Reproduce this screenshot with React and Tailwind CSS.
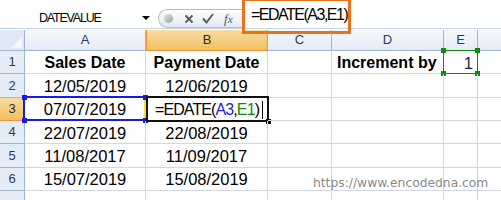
import React from "react"

const cols = [
  { key: "A", w: "w-[121px]" },
  { key: "B", w: "w-[122px]" },
  { key: "C", w: "w-[64px]" },
  { key: "D", w: "w-[112px]" },
  { key: "E", w: "w-[34px]" },
]

const rows = [
  ["Sales Date", "Payment Date", "", "Increment by", "1"],
  ["12/05/2019", "12/06/2019", "", "", ""],
  ["07/07/2019", "", "", "", ""],
  ["22/07/2019", "22/08/2019", "", "", ""],
  ["11/08/2017", "11/09/2017", "", "", ""],
  ["15/07/2019", "15/08/2019", "", "", ""],
]

function Handle({ className }) {
  return <div className={`absolute w-[5px] h-[5px] ${className}`} />
}

function FormulaBar() {
  return (
    <div className="relative flex h-[29px] border-b border-[#c5d3e5] bg-white">
      {/* name box */}
      <div className="w-[158px] flex items-center pl-[39px] pt-[8px]">
        <span className="text-[12.5px] tracking-[-1.2px] text-black" style={{ fontFamily: "'Liberation Sans', sans-serif" }}>
          DATEVALUE
        </span>
        <div className="ml-auto mr-[8px] w-0 h-0 border-l-[4px] border-r-[4px] border-t-[4px] border-l-transparent border-r-transparent border-t-black" />
      </div>
      {/* buttons pill */}
      <div className="mt-[9px] h-[19px] w-[86px] flex items-center rounded-l-full border border-r-0 border-[#aebfd5] bg-gradient-to-b from-[#fdfeff] to-[#e3eaf3]">
        <div className="ml-[5px] w-[9px] h-[9px] rounded-full bg-gradient-to-br from-[#e6e6e6] to-[#9c9c9c]" />
        <svg className="ml-[11px]" width="10" height="10" viewBox="0 0 10 10">
          <path d="M1.5 1.5 L8.5 8.5 M8.5 1.5 L1.5 8.5" stroke="#5a5a5a" strokeWidth="1.8" />
        </svg>
        <svg className="ml-[8px]" width="12" height="11" viewBox="0 0 12 11">
          <path d="M1 5.5 L4.5 9.5 L11 1" stroke="#5a5a5a" strokeWidth="1.9" fill="none" />
        </svg>
        <span className="ml-[10px] text-[13px] italic text-[#555]" style={{ fontFamily: "'Liberation Serif', serif" }}>
          f<span className="text-[11px]">x</span>
        </span>
      </div>
      {/* formula text */}
      <div className="flex-1 flex items-center pl-[7px] pt-[2px]">
        <span className="text-[16px] tracking-[-1.5px] text-black" style={{ fontFamily: "'Liberation Sans', sans-serif" }}>
          =EDATE(A3,E1)
        </span>
      </div>
      {/* highlight box */}
      <div className="absolute left-[242px] top-[-2px] w-[109px] h-[36px] border-[3px] border-[#e8731b]" />
    </div>
  )
}

function HeaderRow() {
  return (
    <div className="flex h-[21px] mt-[1px]">
      <div className="relative w-[25px] border-r border-b border-[#9eb6ce] bg-[#dfe8f5]">
        <div className="absolute right-[2px] bottom-[2px] w-0 h-0"
          style={{ borderRight: "11px solid #f4f7fb", borderTop: "11px solid transparent" }} />
      </div>
      {cols.map(c => (
        <div
          key={c.key}
          className={`${c.w} flex items-center justify-center border-r border-b text-[13px] ${c.key === "B"
            ? "bg-gradient-to-b from-[#f9dba0] to-[#f1c05f] border-[#f29536] border-l text-[#2a2a2a]"
            : "bg-gradient-to-b from-[#f6f8fc] to-[#e4ebf6] border-[#9eb6ce] text-[#2a3b55]"}`}
          style={{ fontFamily: "'Liberation Sans', sans-serif" }}
        >
          {c.key}
        </div>
      ))}
      <div className="flex-1 border-b border-[#9eb6ce] bg-gradient-to-b from-[#f6f8fc] to-[#e4ebf6]" />
    </div>
  )
}

function Cell({ r, c, value }) {
  const isHead = r === 0 && (c === 0 || c === 1)
  const base = "relative border-r border-b border-[#d0d7e5] flex items-end leading-none pb-[2px]"
  const font = { fontFamily: "'Liberation Sans', sans-serif" }

  if (r === 2 && c === 0) {
    return (
      <div className={`${cols[c].w} ${base} justify-center`} style={font}>
        <span className="text-[16.5px] text-black">{value}</span>
        <div className="absolute left-[-2px] top-[-2px] right-[-1px] bottom-[-1px] border-2 border-[#1a1ae8] border-r-[#f2e60a]" />
        <Handle className="left-[-3px] top-[-3px] bg-[#1a1ae8]" />
        <Handle className="right-[-3px] top-[-3px] bg-[#1a1ae8]" />
        <Handle className="left-[-3px] bottom-[-3px] bg-[#1a1ae8]" />
        <Handle className="right-[-3px] bottom-[-3px] bg-[#1a1ae8]" />
      </div>
    )
  }
  if (r === 2 && c === 1) {
    return (
      <div className={`${cols[c].w} ${base} justify-start pl-[9px]`} style={font}>
        <span className="text-[16px] tracking-[-0.9px] text-black">
          =EDATE(<span className="text-[#1f1fd6]">A3</span>,<span className="text-[#118a11]">E1</span>)
        </span>
        <div className="absolute left-[116px] top-[3px] bottom-[1px] w-px bg-black" />
        <div className="absolute left-0 top-[-2px] right-[-2px] bottom-[-2px] border-2 border-[#111]" />
        <div className="absolute right-[-4px] bottom-[-4px] w-[5px] h-[5px] bg-[#111]" />
      </div>
    )
  }
  if (r === 0 && c === 4) {
    return (
      <div className={`${cols[c].w} ${base} justify-end pr-[4px]`} style={font}>
        <span className="text-[16.5px] text-[#0f2a57]">{value}</span>
        <div className="absolute left-[-1px] top-[-1px] right-[-1px] bottom-[-1px] border-[1.5px] border-[#0f8a0f]" />
        <Handle className="left-[-3px] top-[-3px] bg-[#0f8a0f]" />
        <Handle className="right-[-3px] top-[-3px] bg-[#0f8a0f]" />
        <Handle className="left-[-3px] bottom-[-3px] bg-[#0f8a0f]" />
        <Handle className="right-[-3px] bottom-[-3px] bg-[#0f8a0f]" />
      </div>
    )
  }
  if (r === 0 && c === 3) {
    return (
      <div className={`${cols[c].w} ${base} justify-start pl-[5px]`} style={font}>
        <span className="text-[16px] font-bold text-black">{value}</span>
      </div>
    )
  }
  return (
    <div className={`${cols[c].w} ${base} justify-center`} style={font}>
      <span className={isHead ? "text-[16px] font-bold text-black" : "text-[16.5px] text-black"}>{value}</span>
    </div>
  )
}

export default function App() {
  return (
    <div className="w-[501px] h-[200px] overflow-hidden bg-white relative">
      <FormulaBar />
      <HeaderRow />
      {rows.concat([["", "", "", "", ""]]).map((row, r) => (
        <div key={r} className="flex h-[23.33px]">
          <div
            className={`w-[25px] flex items-center justify-center border-r border-b text-[13px] ${r === 2
              ? "bg-gradient-to-b from-[#f9dba0] to-[#f1c05f] border-[#f29536] text-[#2a2a2a]"
              : "bg-[#e4ecf7] border-[#9eb6ce] text-[#2a3b55]"}`}
            style={{ fontFamily: "'Liberation Sans', sans-serif" }}
          >
            {r < 6 ? r + 1 : ""}
          </div>
          {row.map((v, c) => (
            <Cell key={c} r={r} c={c} value={v} />
          ))}
          <div className="flex-1 border-b border-[#d0d7e5]" />
        </div>
      ))}
      <div
        className="absolute left-[313px] top-[174px] text-[12.3px] text-[#8a8a8a]"
        style={{ fontFamily: "'DejaVu Sans', sans-serif" }}
      >
        https://www.encodedna.com
      </div>
    </div>
  )
}
